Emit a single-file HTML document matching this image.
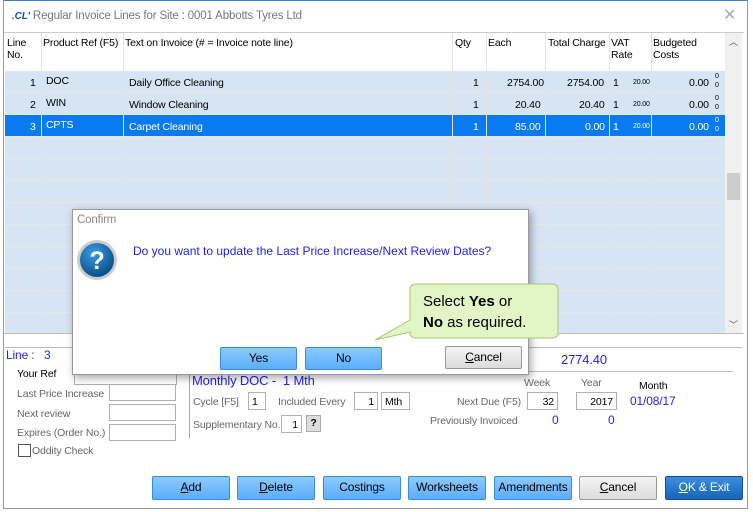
<!DOCTYPE html>
<html><head><meta charset="utf-8"><style>
*{margin:0;padding:0;box-sizing:border-box}
body{width:753px;height:512px;background:#fff;font-family:"Liberation Sans",sans-serif;font-size:10.5px;letter-spacing:-0.15px;position:relative;overflow:hidden;color:#000}
.a{position:absolute}
.win{left:3px;top:0;width:745px;height:509px;border:1px solid #9a9a9a;border-top:1px solid #3c7fc8;background:#fff}
.t{white-space:nowrap}
.row{left:5px;width:720px;height:22px;background:#d6e4f3;border-bottom:1px solid #e6e6e6}
.vl{width:1px;background:#e2e2e2}
.inp{background:#fff;border:1px solid #b0b0b0}
.btn{border:1px solid #3a8ad8;border-radius:2px;background:linear-gradient(#8ccaff,#5aaef8);text-align:center;font-size:12px;line-height:21px;color:#000}
.gbtn{border:1px solid #999;border-radius:2px;background:linear-gradient(#f4f4f4,#dcdcdc);text-align:center;font-size:12px;line-height:21px}
.g{color:#666}
.b{color:#2222ee}
</style></head><body>
<div class="a win"></div>
<div class="a t" style="left:12px;top:10px;font-size:11.5px;color:#777"><b style="color:#1a4f8f;font-style:italic;font-size:10px">.CL'</b> Regular Invoice Lines for Site : 0001 Abbotts Tyres Ltd</div>
<div class="a" style="left:723px;top:5px;font-size:16px;color:#aaa;font-weight:300">✕</div>
<div class="a" style="left:4px;top:32px;width:740px;height:1px;background:#ccc"></div>
<div class="a" style="left:4px;top:33px;width:722px;height:300px;background:#fff"></div>
<div class="a t" style="left:7px;top:37px;line-height:12px">Line<br>No.</div>
<div class="a t" style="left:43px;top:37px">Product Ref (F5)</div>
<div class="a t" style="left:125px;top:37px">Text on Invoice (# = Invoice note line)</div>
<div class="a t" style="left:455px;top:37px">Qty</div>
<div class="a t" style="left:488px;top:37px">Each</div>
<div class="a t" style="left:548px;top:37px">Total Charge</div>
<div class="a t" style="left:611px;top:37px;line-height:12px">VAT<br>Rate</div>
<div class="a t" style="left:653px;top:37px;line-height:12px">Budgeted<br>Costs</div>
<div class="a row" style="top:71px"></div>
<div class="a row" style="top:93px"></div>
<div class="a row" style="top:115px;background:#0a7af0"></div>
<div class="a row" style="top:137px"></div><div class="a row" style="top:159px"></div><div class="a row" style="top:181px"></div><div class="a row" style="top:203px"></div><div class="a row" style="top:225px"></div><div class="a row" style="top:247px"></div><div class="a row" style="top:269px"></div><div class="a row" style="top:291px"></div><div class="a row" style="top:313px;height:20px"></div>
<div class="a vl" style="left:41px;top:33px;height:300px"></div>
<div class="a vl" style="left:123px;top:33px;height:300px"></div>
<div class="a vl" style="left:452px;top:33px;height:300px"></div>
<div class="a vl" style="left:486px;top:33px;height:300px"></div>
<div class="a vl" style="left:545px;top:33px;height:300px"></div>
<div class="a vl" style="left:609px;top:33px;height:300px"></div>
<div class="a vl" style="left:651px;top:33px;height:300px"></div>
<div class="a t" style="left:30px;top:77px">1</div><div class="a t" style="left:46px;top:75px">DOC</div><div class="a t" style="left:129px;top:77px">Daily Office Cleaning</div>
<div class="a t" style="left:30px;top:99px">2</div><div class="a t" style="left:46px;top:97px">WIN</div><div class="a t" style="left:129px;top:99px">Window Cleaning</div>
<div class="a t" style="left:30px;top:121px;color:#fff">3</div><div class="a t" style="left:46px;top:119px;color:#fff">CPTS</div><div class="a t" style="left:129px;top:121px;color:#fff">Carpet Cleaning</div>
<div class="a t" style="left:473px;top:77px">1</div><div class="a t" style="left:507px;top:77px">2754.00</div><div class="a t" style="left:567px;top:77px">2754.00</div><div class="a t" style="left:613px;top:77px">1</div><div class="a t" style="left:633px;top:79px;font-size:7px">20.00</div><div class="a t" style="left:689px;top:77px">0.00</div><div class="a t" style="left:715px;top:72px;font-size:7px;line-height:9px">0<br>0</div>
<div class="a t" style="left:473px;top:99px">1</div><div class="a t" style="left:515px;top:99px">20.40</div><div class="a t" style="left:579px;top:99px">20.40</div><div class="a t" style="left:613px;top:99px">1</div><div class="a t" style="left:633px;top:101px;font-size:7px">20.00</div><div class="a t" style="left:689px;top:99px">0.00</div><div class="a t" style="left:715px;top:94px;font-size:7px;line-height:9px">0<br>0</div>
<div style="color:#fff"><div class="a t" style="left:473px;top:121px">1</div><div class="a t" style="left:515px;top:121px">85.00</div><div class="a t" style="left:585px;top:121px">0.00</div><div class="a t" style="left:613px;top:121px">1</div><div class="a t" style="left:633px;top:123px;font-size:7px">20.00</div><div class="a t" style="left:689px;top:121px">0.00</div><div class="a t" style="left:715px;top:116px;font-size:7px;line-height:9px">0<br>0</div></div>
<div class="a" style="left:725px;top:33px;width:17px;height:300px;background:#f0f0f0"></div>
<div class="a" style="left:727px;top:173px;width:13px;height:27px;background:#cdcdcd"></div>
<div class="a" style="left:729px;top:35px;font-size:9px;color:#555">︿</div>
<div class="a" style="left:729px;top:318px;font-size:9px;color:#555">﹀</div>
<div class="a" style="left:4px;top:333px;width:740px;height:1px;background:#bbb"></div>
<div class="a" style="left:5px;top:347px;width:737px;height:1px;background:#bbb"></div>
<div class="a t b" style="left:6px;top:348px;font-size:12px">Line :&nbsp;&nbsp; 3</div>
<div class="a t" style="left:17px;top:368px">Your Ref</div>
<div class="a inp" style="left:74px;top:369px;width:103px;height:16px"></div>
<div class="a t g" style="left:17px;top:388px">Last Price Increase</div><div class="a inp" style="left:109px;top:384px;width:67px;height:17px"></div>
<div class="a t g" style="left:17px;top:408px">Next review</div><div class="a inp" style="left:109px;top:404px;width:67px;height:17px"></div>
<div class="a t g" style="left:17px;top:427px">Expires (Order No.)</div><div class="a inp" style="left:109px;top:424px;width:67px;height:17px"></div>
<div class="a" style="left:18px;top:444px;width:13px;height:13px;border:1px solid #555"></div>
<div class="a t g" style="left:32px;top:445px">Oddity Check</div>
<div class="a" style="left:189px;top:370px;width:1px;height:68px;background:#aaa"></div>
<div class="a t b" style="left:192px;top:373px;font-size:13px">Monthly DOC -&nbsp; 1 Mth</div>
<div class="a t g" style="left:193px;top:396px">Cycle [F5]</div><div class="a inp" style="left:248px;top:392px;width:18px;height:18px;padding:3px 3px">1</div>
<div class="a t g" style="left:278px;top:396px">Included Every</div><div class="a inp" style="left:354px;top:392px;width:24px;height:18px;text-align:right;padding:3px 3px">1</div><div class="a inp" style="left:381px;top:392px;width:29px;height:18px;padding:3px 3px">Mth</div>
<div class="a t g" style="left:193px;top:419px">Supplementary No.</div><div class="a inp" style="left:281px;top:415px;width:21px;height:18px;text-align:right;padding:3px 3px">1</div><div class="a" style="left:306px;top:415px;width:15px;height:17px;background:#ddd;border:1px solid #aaa;text-align:center;font-weight:bold;line-height:15px">?</div>
<div class="a t b" style="left:561px;top:352px;font-size:13px">2774.40</div>
<div class="a" style="left:529px;top:371px;width:204px;height:1px;background:#bbb"></div>
<div class="a t g" style="left:524px;top:377px">Week</div><div class="a t g" style="left:581px;top:377px">Year</div><div class="a t" style="left:639px;top:380px">Month</div>
<div class="a t g" style="left:457px;top:396px">Next Due (F5)</div>
<div class="a inp" style="left:527px;top:392px;width:31px;height:18px;text-align:right;padding:3px 3px">32</div>
<div class="a inp" style="left:576px;top:392px;width:41px;height:18px;text-align:right;padding:3px 3px">2017</div>
<div class="a t b" style="left:630px;top:394px;font-size:12px">01/08/17</div>
<div class="a t g" style="left:430px;top:415px">Previously Invoiced</div>
<div class="a t b" style="left:552px;top:413px;font-size:12px">0</div><div class="a t b" style="left:608px;top:413px;font-size:12px">0</div>
<div class="a btn" style="left:152px;top:476px;width:78px;height:24px"><u>A</u>dd</div>
<div class="a btn" style="left:237px;top:476px;width:78px;height:24px"><u>D</u>elete</div>
<div class="a btn" style="left:323px;top:476px;width:78px;height:24px">Costings</div>
<div class="a btn" style="left:408px;top:476px;width:78px;height:24px">Worksheets</div>
<div class="a btn" style="left:494px;top:476px;width:78px;height:24px">Amendments</div>
<div class="a gbtn" style="left:579px;top:476px;width:78px;height:24px"><u>C</u>ancel</div>
<div class="a btn" style="left:665px;top:476px;width:78px;height:24px;background:linear-gradient(#3d8ee0,#1763b8);border-color:#124f94;color:#fff"><u>O</u>K &amp; Exit</div>
<div class="a" style="left:72px;top:209px;width:457px;height:166px;background:#fff;border:1px solid #999;box-shadow:2px 3px 8px rgba(0,0,0,.35)"></div>
<div class="a t" style="left:77px;top:214px;font-size:11.5px;color:#888">Confirm</div>
<svg class="a" style="left:76px;top:239px" width="42" height="42"><defs><radialGradient id="g" cx=".4" cy=".3" r=".7"><stop offset="0" stop-color="#3a9be0"/><stop offset="1" stop-color="#0a4f8a"/></radialGradient></defs><circle cx="21" cy="21" r="20" fill="#ccc"/><circle cx="21" cy="21" r="17" fill="url(#g)"/><text x="21" y="30" text-anchor="middle" font-family="Liberation Sans" font-weight="bold" font-size="25" fill="#fff">?</text></svg>
<div class="a t" style="left:133px;top:244px;font-size:12px;letter-spacing:0;color:#2020ee">Do you want to update the Last Price Increase/Next Review Dates?</div>
<div class="a btn" style="left:220px;top:347px;width:77px;height:23px">Yes</div>
<div class="a btn" style="left:305px;top:347px;width:77px;height:23px">No</div>
<div class="a gbtn" style="left:445px;top:346px;width:77px;height:23px"><u>C</u>ancel</div>
<svg class="a" style="left:370px;top:280px" width="192" height="64"><path d="M46 4 Q40 4 40 10 L40 40 L5 60 L40 52 L40 52 Q40 58 46 58 L182 58 Q188 58 188 52 L188 10 Q188 4 182 4 Z" fill="#e2f5c4" stroke="#a8c870" stroke-width="1"/></svg>
<div class="a t" style="left:423px;top:291px;font-size:15px;letter-spacing:0;line-height:21px">Select <b>Yes</b> or<br><b>No</b> as required.</div>
</body></html>
